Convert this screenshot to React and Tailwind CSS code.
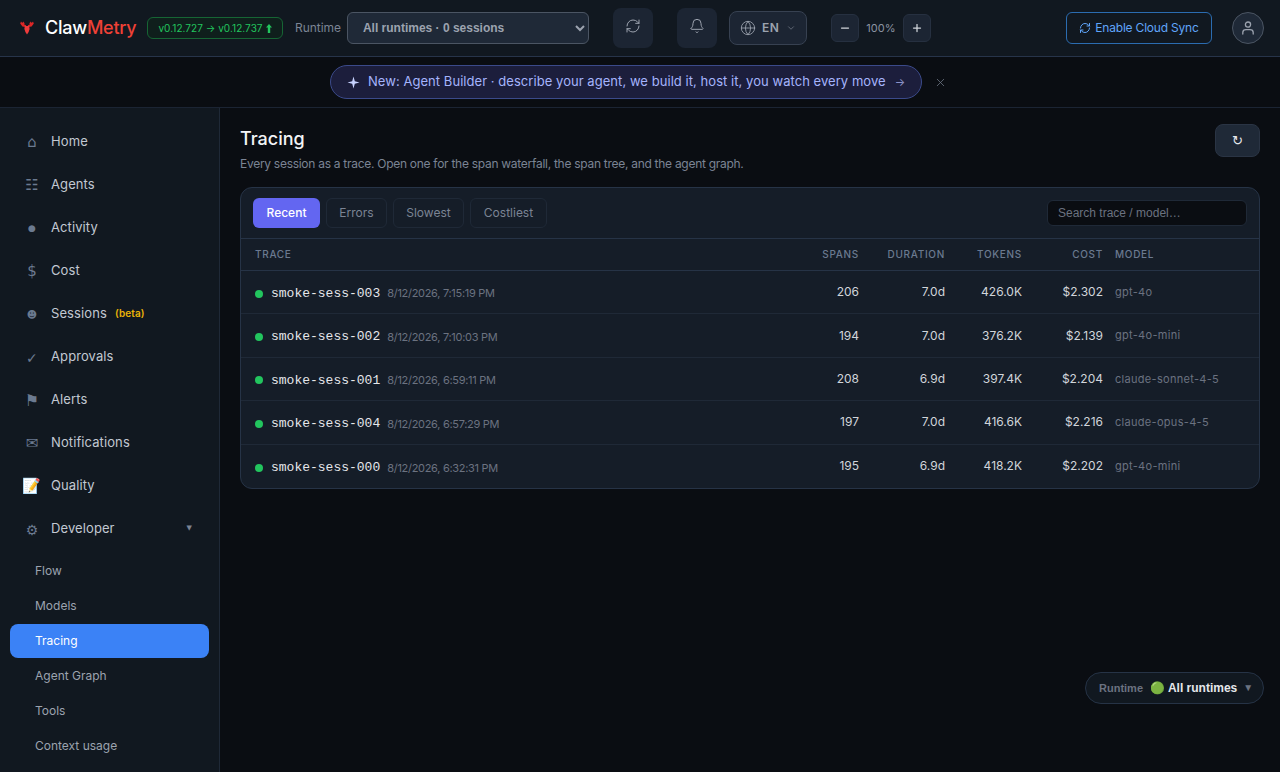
import React from 'react';
import { RefreshCw, Bell, Globe, ChevronDown, Minus, Plus, X } from 'lucide-react';

const nav = [
  ['⌂', 'Home', 'text-[15px]'], ['☷', 'Agents', 'text-[15px]'], ['●', 'Activity', 'text-[9px]'], ['$', 'Cost', 'text-[15px]'], ['☻', 'Sessions', 'text-[10px]', true],
  ['✓', 'Approvals', 'text-[14px]'], ['⚑', 'Alerts', 'text-[16px]'], ['✉', 'Notifications', 'text-[15px]'], ['📝', 'Quality', 'text-[15px]'], ['⚙', 'Developer', 'text-[14px]', false, true],
];
const sub = ['Flow', 'Models', 'Tracing', 'Agent Graph', 'Tools', 'Context usage'];
const rows = [
  ['smoke-sess-003', '8/12/2026, 7:15:19 PM', '206', '7.0d', '426.0K', '$2.302', 'gpt-4o'],
  ['smoke-sess-002', '8/12/2026, 7:10:03 PM', '194', '7.0d', '376.2K', '$2.139', 'gpt-4o-mini'],
  ['smoke-sess-001', '8/12/2026, 6:59:11 PM', '208', '6.9d', '397.4K', '$2.204', 'claude-sonnet-4-5'],
  ['smoke-sess-004', '8/12/2026, 6:57:29 PM', '197', '7.0d', '416.6K', '$2.216', 'claude-opus-4-5'],
  ['smoke-sess-000', '8/12/2026, 6:32:31 PM', '195', '6.9d', '418.2K', '$2.202', 'gpt-4o-mini'],
];
const grid = 'grid grid-cols-[1fr_60px_74px_65px_69px_130px] gap-x-3 px-3.5 items-center';

function Logo() {
  return (
    <svg width="16" height="16" viewBox="0 0 16 16" className="shrink-0">
      <path d="M6.6 7 L3.4 6.4 L1.2 3.6 L2 1.6 L3.3 3 L4.2 1.4 L5.6 3.2 L5.2 4.6 L7.2 5.2 Z" fill="#dc2626" />
      <path d="M9.4 7 L12.6 6.4 L14.8 3.6 L14 1.6 L12.7 3 L11.8 1.4 L10.4 3.2 L10.8 4.6 L8.8 5.2 Z" fill="#dc2626" />
      <path d="M5.8 6 H10.2 L10.6 9 L9.6 12 L8 14.4 L6.4 12 L5.4 9 Z" fill="#ef3b3b" />
    </svg>
  );
}

function Avatar() {
  return (
    <svg width="16" height="16" viewBox="0 0 16 16" fill="none" stroke="currentColor" strokeWidth="1.3" strokeLinecap="round">
      <circle cx="8" cy="4.6" r="2.6" />
      <path d="M2.8 14 V12.4 C2.8 10.6 4.2 9.6 6 9.6 H10 C11.8 9.6 13.2 10.6 13.2 12.4 V14" />
    </svg>
  );
}

export default function App() {
  return (
    <div className="h-[772px] w-[1280px] overflow-hidden flex flex-col bg-[#0a0d12] text-[#e5e7eb] font-['Inter',sans-serif]">
      <header className="h-[57px] shrink-0 flex items-center border-b border-[#27344a] bg-[#111820] pl-[19px] pr-4 [&>*]:shrink-0">
        <Logo />
        <div className="ml-[10px] w-[92px] text-[18px] leading-none font-medium tracking-[-0.25px] text-white">Claw<span className="text-[#ef4136]">Metry</span></div>
        <div className="ml-[10px] h-[22px] w-[136px] rounded-md border border-[#166534] bg-[#0f1f1c] flex items-center justify-center gap-[3px] text-[10px] tracking-[0.05px] text-[#22c55e] whitespace-nowrap">
          v0.12.727 → v0.12.737
          <svg width="6" height="9" viewBox="0 0 6 9" fill="#22c55e"><path d="M3 0 L6 3.6 H4.2 V9 H1.8 V3.6 H0 Z" /></svg>
        </div>
        <div className="ml-3 text-xs text-[#7b8494] tracking-[-0.05px]">Runtime</div>
        <select defaultValue="a" className="ml-[6px] h-8 w-[242px] rounded-md border border-[#4b5563] bg-[#1f2937] pl-[11px] text-xs font-bold text-[#9ca3af] font-['Liberation_Sans',sans-serif]">
          <option value="a">All runtimes · 0 sessions</option>
        </select>
        <div className="ml-6 size-10 rounded-lg bg-[#1c2533] flex items-center justify-center pb-1 text-[#9ca3af]"><RefreshCw size={16} strokeWidth={1.5} /></div>
        <div className="ml-6 size-10 rounded-lg bg-[#1c2533] flex items-center justify-center pb-1 text-[#9ca3af]"><Bell size={16} strokeWidth={1.5} /></div>
        <div className="ml-3 h-[34px] w-[78px] rounded-lg border border-[#374151] bg-[#1c2533] flex items-center pl-[10px] text-[#9ca3af]">
          <Globe size={16} strokeWidth={1.3} />
          <span className="ml-[6px] text-xs font-semibold tracking-[0.5px]">EN</span>
          <ChevronDown size={10} className="ml-[7px] text-[#6b7280]" />
        </div>
        <div className="ml-6 size-7 rounded-md border border-[#263040] bg-[#1c2533] flex items-center justify-center text-[#d1d5db]"><Minus size={12} strokeWidth={2.5} /></div>
        <div className="w-11 text-center text-[11px] text-[#8b93a1]">100%</div>
        <div className="size-7 rounded-md border border-[#263040] bg-[#1c2533] flex items-center justify-center text-[#d1d5db]"><Plus size={12} strokeWidth={2.5} /></div>
        <div className="ml-auto h-8 w-[146px] rounded-md border border-[#2b6cb0] flex items-center justify-center gap-1 text-xs text-[#60a5fa] whitespace-nowrap tracking-[-0.2px]"><RefreshCw size={12} strokeWidth={2} />Enable Cloud Sync</div>
        <div className="ml-5 size-8 rounded-full border border-[#4b5563] bg-[#1f2937] flex items-center justify-center text-[#9ca3af]"><Avatar /></div>
      </header>

      <div className="h-[51px] shrink-0 flex items-center border-b border-[#1b2433] bg-[#0a0d12] pl-[330px]">
        <div className="h-[34px] w-[592px] rounded-full border border-[#3b4a8a] bg-[#1c1e3c] flex items-center pl-4 text-[13px] tracking-[0.05px] text-[#a5b4fc] whitespace-nowrap">
          <svg width="13" height="13" viewBox="0 0 13 13" className="shrink-0"><path d="M6.5 0.5 L7.8 5.2 L12.5 6.5 L7.8 7.8 L6.5 12.5 L5.2 7.8 L0.5 6.5 L5.2 5.2 Z" fill="#c7d2fe" /></svg>
          <span className="ml-[8px]">New: Agent Builder · describe your agent, we build it, host it, you watch every move</span>
          <span className="ml-[9px] text-[11px] text-[#8b93c9]">→</span>
        </div>
        <X size={13} strokeWidth={1.5} className="ml-3 text-[#6b7280]" />
      </div>

      <div className="flex-1 min-h-0 flex">
        <aside className="w-[220px] shrink-0 border-r border-[#1f2937] bg-[#111820] pt-[12px] overflow-hidden">
          <nav className="flex flex-col">
            {nav.map(([icon, label, size, beta, caret]) => (
              <div key={label} className="h-[43px] shrink-0 flex items-center pl-[24px] pr-[27px] text-[13px] tracking-[0.1px] text-[#c2c8d2]">
                <span className={`w-[16px] flex justify-center ${size} text-[#6b7a90] mr-[11px] leading-none translate-y-px font-['DejaVu_Sans',sans-serif]`}>{icon}</span>
                <span>{label}</span>
                {beta && <span className="ml-2 text-[10px] font-semibold text-[#eab308]">(beta)</span>}
                {caret && <span className="ml-auto text-[7px] text-[#7b8494] font-['DejaVu_Sans',sans-serif]">▼</span>}
              </div>
            ))}
          </nav>
          <div className="px-[10px] pt-[4px] flex flex-col gap-px">
            {sub.map((s) => (
              <div key={s} className={`h-[34px] shrink-0 flex items-center pl-[25px] rounded-lg text-xs ${s === 'Tracing' ? 'bg-[#3b82f6] text-white' : 'text-[#9ca3af]'}`}>{s}</div>
            ))}
          </div>
        </aside>

        <main className="flex-1 min-w-0 pt-4 px-5">
          <div className="flex items-start justify-between h-[63px]">
            <div>
              <h1 className="text-[18px] leading-7 mt-px font-medium text-[#f3f4f6]">Tracing</h1>
              <p className="mt-[3px] text-xs leading-4 text-[#7b8494] tracking-[-0.28px]">Every session as a trace. Open one for the span waterfall, the span tree, and the agent graph.</p>
            </div>
            <div className="h-[33px] w-[45px] rounded-lg border border-[#2a3444] bg-[#1f2937] flex items-center justify-center text-[13px] text-[#e5e7eb] font-['DejaVu_Sans',sans-serif]">↻</div>
          </div>

          <section className="rounded-xl border border-[#263346] bg-[#151d28] overflow-hidden">
            <div className="h-[51px] flex items-center px-3 border-b border-[#263346]">
              <div className="h-[30px] w-[67px] rounded-md bg-[#6366f1] flex items-center justify-center text-xs font-medium text-white">Recent</div>
              {[['Errors', 'w-[61px]'], ['Slowest', 'w-[71px]'], ['Costliest', 'w-[77px]']].map(([t, w]) => (
                <div key={t} className={`ml-[6px] h-[30px] ${w} rounded-md border border-[#1f2937] flex items-center justify-center text-xs text-[#7b8494]`}>{t}</div>
              ))}
              <input placeholder="Search trace / model…" className="ml-auto h-[26px] w-[200px] rounded-md border border-[#1f2937] bg-[#0a0d12] px-[10px] text-xs font-['Liberation_Sans',sans-serif] text-[#e5e7eb] placeholder:text-[#6b7280] outline-none" />
            </div>
            <div className={`${grid} h-8 border-b border-[#263346] text-[10px] font-medium tracking-[0.7px] text-[#6b7a90]`}>
              <div>TRACE</div>
              <div className="text-right">SPANS</div>
              <div className="text-right">DURATION</div>
              <div className="text-right">TOKENS</div>
              <div className="text-right">COST</div>
              <div>MODEL</div>
            </div>
            {rows.map((r, i) => (
              <div key={r[0]} className={`${grid} h-[43.4px] ${i < 4 ? 'border-b border-[#1f2937]' : ''}`}>
                <div className="flex items-center min-w-0 whitespace-nowrap pt-[3px]">
                  <span className="size-2 rounded-full bg-[#22c55e] mr-2" />
                  <span className="text-[13px] text-[#e5e7eb] font-['Liberation_Mono',monospace]">{r[0]}</span>
                  <span className="ml-[7px] text-[11px] text-[#6b7280] tracking-[-0.3px]">{r[1]}</span>
                </div>
                <div className="text-right text-xs text-[#d1d5db]">{r[2]}</div>
                <div className="text-right text-xs text-[#d1d5db]">{r[3]}</div>
                <div className="text-right text-xs text-[#d1d5db]">{r[4]}</div>
                <div className="text-right text-xs text-[#d1d5db]">{r[5]}</div>
                <div className="text-[11px] tracking-[0.3px] text-[#6b7280]">{r[6]}</div>
              </div>
            ))}
          </section>
        </main>
      </div>

      <div className="fixed left-[1085px] top-[672px] h-8 w-[179px] rounded-full border border-[#263346] bg-[#111820] flex items-center pl-[13px] text-xs font-['Liberation_Sans',sans-serif] whitespace-nowrap">
        <span className="text-[11px] font-bold text-[#6b7280]">Runtime</span>
        <span className="ml-[7px] text-xs font-bold text-[#e5e7eb]">🟢 All runtimes</span>
        <span className="ml-[6px] text-[10px] text-[#6b7280]">▼</span>
      </div>
    </div>
  );
}
